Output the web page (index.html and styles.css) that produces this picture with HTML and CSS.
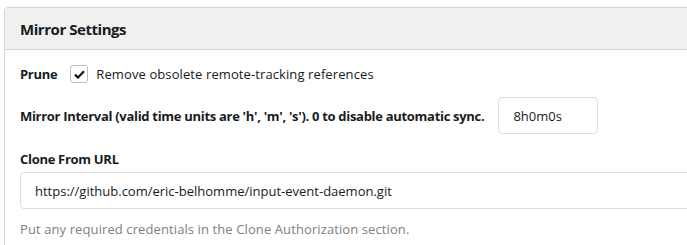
FILE: index.html
```html
<!DOCTYPE html>
<html>
<head>
<meta charset="utf-8">
<link rel="stylesheet" href="styles.css">
</head>
<body>
<div class="card">
  <div class="card-header">Mirror Settings</div>
  <div class="card-body">
    <div class="row prune">
      <span class="label">Prune</span>
      <span class="checkbox">
        <svg width="11" height="9" viewBox="0 0 11 9"><path d="M1 4.6 L4 7.5 L10 1.2" fill="none" stroke="#111" stroke-width="2.2"/></svg>
      </span>
      <span class="cb-text">Remove obsolete remote-tracking references</span>
    </div>
    <div class="row interval">
      <span class="label">Mirror Interval (valid time units are 'h', 'm', 's'). 0 to disable automatic sync.</span>
      <div class="input small">8h0m0s</div>
    </div>
    <div class="field">
      <div class="label">Clone From URL</div>
      <div class="input wide">https://github.com/eric-belhomme/input-event-daemon.git</div>
      <div class="help">Put any required credentials in the Clone Authorization section.</div>
    </div>
  </div>
</div>
</body>
</html>
```
FILE: styles.css
```css
html, body { margin: 0; padding: 0; background: #fff; overflow: hidden; }
body {
  font-family: "Open Sans", "Noto Sans", sans-serif;
  font-size: 13px;
  color: #181c21;
  width: 687px;
  height: 245px;
}
.card {
  margin: 7px 0 0 4px;
  width: 900px;
  border: 1px solid #d4d4d5;
  border-radius: 4px 0 0 0;
}
.card-header {
  height: 41px;
  background: #f0f0f0;
  border-bottom: 1px solid #d4d4d5;
  display: flex;
  align-items: center;
  padding: 0 15px;
  font-weight: 700;
  font-size: 15px;
  letter-spacing: -0.45px;
}
.card-body { padding: 15px 15px; }
.row { display: flex; align-items: center; }
.label { font-weight: 700; letter-spacing: -0.3px; }
.prune { height: 18px; }
.checkbox {
  width: 16px; height: 16px;
  border: 1px solid #bdbdbd;
  border-radius: 3px;
  margin-left: 13px;
  display: flex; align-items: center; justify-content: center;
}
.cb-text { margin-left: 8px; letter-spacing: 0.1px; }
.interval { margin-top: 14px; }
.input {
  box-sizing: border-box;
  height: 37px;
  border: 1px solid #dedede;
  border-radius: 4px;
  display: flex; align-items: center;
  padding: 0 14px;
}
.small { width: 100px; margin-left: 14px; }
.field { margin-top: 16px; }
.field .label { line-height: 18px; }
.wide { width: 700px; margin-top: 4px; }
.help { color: #808080; margin-top: 11px; letter-spacing: 0.1px; }
```
